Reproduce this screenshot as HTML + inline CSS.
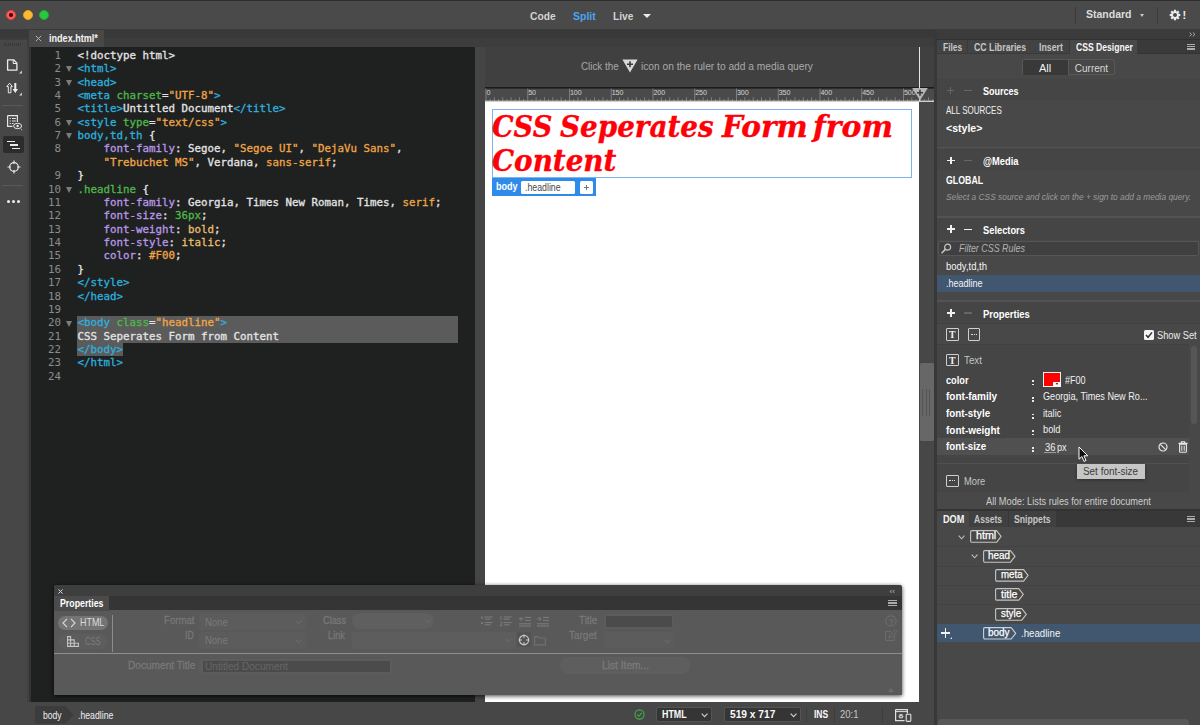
<!DOCTYPE html>
<html><head><meta charset="utf-8"><title>Dreamweaver</title>
<style>
*{box-sizing:border-box;margin:0;padding:0}
html,body{width:1200px;height:725px;overflow:hidden;background:#474747}
body{position:relative;font-family:"Liberation Sans",sans-serif;font-size:10px;color:#e6e6e6}
.a{position:absolute;display:block}
.t{position:absolute;white-space:pre;line-height:14px;height:14px;transform-origin:0 50%}
svg{position:absolute;overflow:visible}
#code{position:absolute;left:31px;top:47px;width:444px;height:655px;background:#1f2121;font-family:"DejaVu Sans Mono","Liberation Mono",monospace;font-size:10.8px;overflow:hidden}
.ln{position:absolute;left:0;width:30px;text-align:right;line-height:13.375px;height:13.375px;color:#8c8c8c}
.fd{position:absolute;left:34.7px;border-left:3.5px solid transparent;border-right:3.5px solid transparent;border-top:6.4px solid #7c7c7c}
.cl{position:absolute;left:46.5px;line-height:13.375px;height:13.375px;font:inherit;font-weight:normal;-webkit-text-stroke:0.3px;white-space:pre}
.p{color:#e4e4e4}.tg{color:#2db0de}.at{color:#4db848}.st{color:#f0a646}.pr{color:#b898e6}.vl{color:#e8bd6c}
</style></head><body>
<i class="a" style="left:0px;top:0px;width:1200px;height:29px;background:#4a4a4a;border-top:1px solid #2d2d2d"></i>
<i class="a" style="left:5.7px;top:9.8px;width:10.4px;height:10.4px;border-radius:50%;background:#fc5b57;border:0.5px solid #e2463f"></i>
<i class="a" style="left:22.5px;top:9.8px;width:10.4px;height:10.4px;border-radius:50%;background:#fdbc2e;border:0.5px solid #e0a028"></i>
<i class="a" style="left:39.1px;top:9.8px;width:10.4px;height:10.4px;border-radius:50%;background:#28c840;border:0.5px solid #1fab30"></i>
<i class="a" style="left:9.1px;top:13.2px;width:3.6px;height:3.6px;border-radius:50%;background:#4c0002"></i>
<span class="t" style="left:529.50px;top:9px;font-size:11px;color:#d4d4d4;font-weight:bold;transform:scaleX(0.931);">Code</span>
<span class="t" style="left:572.50px;top:9px;font-size:11px;color:#4aa4f2;font-weight:bold;transform:scaleX(0.952);">Split</span>
<span class="t" style="left:612.80px;top:9px;font-size:11px;color:#d4d4d4;font-weight:bold;transform:scaleX(0.923);">Live</span>
<i class="a" style="left:642.7px;top:13.5px;border-left:4px solid transparent;border-right:4px solid transparent;border-top:4.8px solid #ececec"></i>
<i class="a" style="left:1075px;top:7px;width:1px;height:17px;background:#3b3b3b;"></i>
<span class="t" style="left:1085.50px;top:7px;font-size:11.5px;color:#dcdcdc;font-weight:bold;transform:scaleX(0.913);">Standard</span>
<i class="a" style="left:1139.5px;top:13.6px;border-left:2.6px solid transparent;border-right:2.6px solid transparent;border-top:3px solid #c8c8c8"></i>
<i class="a" style="left:1156.5px;top:7px;width:1px;height:17px;background:#3b3b3b;"></i>
<svg style="left:1169.2px;top:9.3px" width="12" height="12" viewBox="-6 -6 12 12"><g fill="#ececec"><circle r="3.8"/><rect id="gt" x="-1.1" y="-5.3" width="2.2" height="10.6"/><use href="#gt" transform="rotate(45)"/><use href="#gt" transform="rotate(90)"/><use href="#gt" transform="rotate(135)"/></g><circle r="2" fill="#4a4a4a"/></svg>
<span class="t" style="left:1182.60px;top:8px;font-size:11px;color:#ececec;font-weight:bold;">!</span>
<i class="a" style="left:0px;top:29px;width:1200px;height:18px;background:#3d3d3d;"></i>
<i class="a" style="left:0px;top:29px;width:1200px;height:9px;background:#393939;"></i>
<i class="a" style="left:28.5px;top:30px;width:75.5px;height:17px;background:#484848;"></i>
<svg style="left:35px;top:35px" width="7" height="7" viewBox="0 0 7 7"><path d="M0.8 0.8L6.2 6.2M6.2 0.8L0.8 6.2" stroke="#b4b4b4" stroke-width="1" fill="none"/></svg>
<span class="t" style="left:48.70px;top:32px;font-size:10px;color:#f4f4f4;font-weight:bold;transform:scaleX(0.907);">index.html*</span>
<i class="a" style="left:0px;top:39.6px;width:26.5px;height:686px;background:#474747;"></i>
<i class="a" style="left:4px;top:43px;width:17px;height:3px;background:repeating-linear-gradient(90deg,#393939 0 1px,transparent 1px 2px);"></i>
<i class="a" style="left:26.5px;top:47px;width:4.5px;height:655px;background:linear-gradient(90deg,#414141 0 2.5px,#343434 2.5px);"></i>
<svg style="left:6px;top:58px" width="18" height="20" viewBox="0 0 18 20"><path d="M1.6 1.8H7.6L10.9 5.1V12.1H1.6Z" fill="none" stroke="#ededed" stroke-width="1.3" stroke-linejoin="round"/><path d="M7.2 2V5.5H10.7" fill="none" stroke="#ededed" stroke-width="1"/><path d="M16 12.4V15.4H13Z" fill="#cfcfcf"/></svg>
<svg style="left:6px;top:82px" width="18" height="20" viewBox="0 0 18 20"><path d="M3.6 1.2L6.4 4.6H4.9V10.8H2.3V4.6H0.8Z" fill="none" stroke="#ededed" stroke-width="1"/><path d="M8.3 1V7H6.6L9.3 10.9L12 7H10.3V1Z" fill="#ededed"/><path d="M16 10.4V13.4H13Z" fill="#cfcfcf"/></svg>
<i class="a" style="left:2px;top:104.5px;width:21px;height:1px;background:#585858;"></i>
<svg style="left:6px;top:114px" width="18" height="18" viewBox="0 0 18 18"><path d="M1.6 1.6H11.4V8M1.6 1.6V12.4H6.5" fill="none" stroke="#e6e6e6" stroke-width="1.2"/><path d="M3.6 4.5h1.2M6 4.5h3.8M3.6 7h1.2M6 7h3.8M3.6 9.5h1.2M6 9.5h1.5" stroke="#e6e6e6" stroke-width="1"/><ellipse cx="11.6" cy="12" rx="4" ry="2.7" fill="#474747" stroke="#e6e6e6" stroke-width="1"/><circle cx="11.6" cy="12" r="1.2" fill="#e6e6e6"/><path d="M15 16.2V14.4L16.4 16.2Z" fill="#cfcfcf"/></svg>
<i class="a" style="left:3px;top:136px;width:21px;height:17px;background:#2c2c2c;border-radius:2px"></i>
<i class="a" style="left:7px;top:140.5px;width:8px;height:1.6px;background:#ededed;"></i><i class="a" style="left:10px;top:144px;width:8px;height:1.6px;background:#ededed;"></i><i class="a" style="left:12px;top:147.5px;width:8px;height:1.6px;background:#ededed;"></i>
<svg style="left:6px;top:159px" width="16" height="16" viewBox="0 0 16 16"><circle cx="8" cy="8" r="4.3" fill="none" stroke="#e6e6e6" stroke-width="1.2"/><path d="M8 1.5V5M8 11V14.5M1.5 8H5M11 8H14.5" stroke="#e6e6e6" stroke-width="1.2"/></svg>
<i class="a" style="left:2px;top:184.5px;width:21px;height:1px;background:#585858;"></i>
<i class="a" style="left:7px;top:199.5px;width:3.4px;height:3.4px;background:#ededed;border-radius:50%"></i>
<i class="a" style="left:12px;top:199.5px;width:3.4px;height:3.4px;background:#ededed;border-radius:50%"></i>
<i class="a" style="left:17px;top:199.5px;width:3.4px;height:3.4px;background:#ededed;border-radius:50%"></i>
<div id="code">
<i class="a" style="left:46px;top:269.30px;width:381px;height:26.75px;background:#5b5b5b"></i>
<i class="a" style="left:46px;top:295.75px;width:46px;height:13.68px;background:#5b5b5b"></i>
<span class="ln" style="top:1.80px">1</span>
<pre class="cl" style="top:1.80px"><span class="p">&lt;!doctype html&gt;</span></pre>
<span class="ln" style="top:15.17px">2</span>
<i class="fd" style="top:19.37px"></i>
<pre class="cl" style="top:15.17px"><span class="tg">&lt;html&gt;</span></pre>
<span class="ln" style="top:28.55px">3</span>
<i class="fd" style="top:32.75px"></i>
<pre class="cl" style="top:28.55px"><span class="tg">&lt;head&gt;</span></pre>
<span class="ln" style="top:41.92px">4</span>
<pre class="cl" style="top:41.92px"><span class="tg">&lt;meta</span> <span class="at">charset</span><span class="p">=</span><span class="st">"UTF-8"</span><span class="tg">&gt;</span></pre>
<span class="ln" style="top:55.30px">5</span>
<pre class="cl" style="top:55.30px"><span class="tg">&lt;title&gt;</span><span class="p">Untitled Document</span><span class="tg">&lt;/title&gt;</span></pre>
<span class="ln" style="top:68.67px">6</span>
<i class="fd" style="top:72.88px"></i>
<pre class="cl" style="top:68.67px"><span class="tg">&lt;style</span> <span class="at">type</span><span class="p">=</span><span class="st">"text/css"</span><span class="tg">&gt;</span></pre>
<span class="ln" style="top:82.05px">7</span>
<i class="fd" style="top:86.25px"></i>
<pre class="cl" style="top:82.05px"><span class="tg">body,td,th</span> <span class="p">{</span></pre>
<span class="ln" style="top:95.42px">8</span>
<pre class="cl" style="top:95.42px">    <span class="pr">font-family</span><span class="p">: Segoe, </span><span class="st">"Segoe UI"</span><span class="p">, </span><span class="st">"DejaVu Sans"</span><span class="p">,</span></pre>
<pre class="cl" style="top:108.80px">    <span class="st">"Trebuchet MS"</span><span class="p">, Verdana, </span><span class="st">sans-serif</span><span class="p">;</span></pre>
<span class="ln" style="top:122.17px">9</span>
<pre class="cl" style="top:122.17px"><span class="p">}</span></pre>
<span class="ln" style="top:135.55px">10</span>
<i class="fd" style="top:139.75px"></i>
<pre class="cl" style="top:135.55px"><span class="at">.headline</span> <span class="p">{</span></pre>
<span class="ln" style="top:148.93px">11</span>
<pre class="cl" style="top:148.93px">    <span class="pr">font-family</span><span class="p">: Georgia, Times New Roman, Times, </span><span class="st">serif</span><span class="p">;</span></pre>
<span class="ln" style="top:162.30px">12</span>
<pre class="cl" style="top:162.30px">    <span class="pr">font-size</span><span class="p">: </span><span class="at">36px</span><span class="p">;</span></pre>
<span class="ln" style="top:175.68px">13</span>
<pre class="cl" style="top:175.68px">    <span class="pr">font-weight</span><span class="p">: </span><span class="vl">bold</span><span class="p">;</span></pre>
<span class="ln" style="top:189.05px">14</span>
<pre class="cl" style="top:189.05px">    <span class="pr">font-style</span><span class="p">: </span><span class="vl">italic</span><span class="p">;</span></pre>
<span class="ln" style="top:202.43px">15</span>
<pre class="cl" style="top:202.43px">    <span class="pr">color</span><span class="p">: </span><span class="st">#F00</span><span class="p">;</span></pre>
<span class="ln" style="top:215.80px">16</span>
<pre class="cl" style="top:215.80px"><span class="p">}</span></pre>
<span class="ln" style="top:229.18px">17</span>
<pre class="cl" style="top:229.18px"><span class="tg">&lt;/style&gt;</span></pre>
<span class="ln" style="top:242.55px">18</span>
<pre class="cl" style="top:242.55px"><span class="tg">&lt;/head&gt;</span></pre>
<span class="ln" style="top:255.93px">19</span>
<span class="ln" style="top:269.30px">20</span>
<i class="fd" style="top:273.50px"></i>
<pre class="cl" style="top:269.30px"><span class="tg">&lt;body</span> <span class="at">class</span><span class="p">=</span><span class="st">"headline"</span><span class="tg">&gt;</span></pre>
<span class="ln" style="top:282.68px">21</span>
<pre class="cl" style="top:282.68px"><span class="p">CSS Seperates Form from Content</span></pre>
<span class="ln" style="top:296.05px">22</span>
<pre class="cl" style="top:296.05px"><span class="tg">&lt;/body&gt;</span></pre>
<span class="ln" style="top:309.43px">23</span>
<pre class="cl" style="top:309.43px"><span class="tg">&lt;/html&gt;</span></pre>
<span class="ln" style="top:322.80px">24</span>
</div>
<i class="a" style="left:475px;top:47px;width:10px;height:655px;background:#454545;"></i>
<i class="a" style="left:485px;top:46.5px;width:449.5px;height:40.5px;background:#404040;"></i>
<span class="t" style="left:580.80px;top:60px;font-size:10px;color:#a9a9a9;transform:scaleX(0.980);">Click the</span>
<span class="t" style="left:640.60px;top:60px;font-size:10px;color:#a9a9a9;transform:scaleX(1.021);">icon on the ruler to add a media query</span>
<svg style="left:622px;top:58.5px" width="16" height="14" viewBox="0 0 16 14"><path d="M0.4 0.5H15.6L8 13.5Z" fill="#dadada"/><path d="M8 2.2V8.2M5 5.2H11" stroke="#3a3a3a" stroke-width="1.6"/></svg>
<svg style="left:485px;top:86.5px" width="449.5" height="15" viewBox="0 0 449.5 15"><rect x="0" y="0" width="449.5" height="15" fill="#4a4a4a"/><rect x="0" y="0" width="449.5" height="1.6" fill="#1b1b1b"/><path d="M1.00 1.6V14M5.17 12V14M9.35 10.2V14M13.52 12V14M17.70 10.2V14M21.88 12V14M26.05 10.2V14M30.22 12V14M34.40 10.2V14M38.57 12V14M42.75 1.6V14M46.92 12V14M51.10 10.2V14M55.27 12V14M59.45 10.2V14M63.62 12V14M67.80 10.2V14M71.97 12V14M76.15 10.2V14M80.33 12V14M84.50 1.6V14M88.67 12V14M92.85 10.2V14M97.02 12V14M101.20 10.2V14M105.38 12V14M109.55 10.2V14M113.72 12V14M117.90 10.2V14M122.07 12V14M126.25 1.6V14M130.42 12V14M134.60 10.2V14M138.78 12V14M142.95 10.2V14M147.12 12V14M151.30 10.2V14M155.47 12V14M159.65 10.2V14M163.82 12V14M168.00 1.6V14M172.17 12V14M176.35 10.2V14M180.53 12V14M184.70 10.2V14M188.88 12V14M193.05 10.2V14M197.22 12V14M201.40 10.2V14M205.57 12V14M209.75 1.6V14M213.92 12V14M218.10 10.2V14M222.27 12V14M226.45 10.2V14M230.62 12V14M234.80 10.2V14M238.97 12V14M243.15 10.2V14M247.32 12V14M251.50 1.6V14M255.67 12V14M259.85 10.2V14M264.02 12V14M268.20 10.2V14M272.38 12V14M276.55 10.2V14M280.72 12V14M284.90 10.2V14M289.07 12V14M293.25 1.6V14M297.43 12V14M301.60 10.2V14M305.77 12V14M309.95 10.2V14M314.12 12V14M318.30 10.2V14M322.47 12V14M326.65 10.2V14M330.82 12V14M335.00 1.6V14M339.18 12V14M343.35 10.2V14M347.52 12V14M351.70 10.2V14M355.88 12V14M360.05 10.2V14M364.22 12V14M368.40 10.2V14M372.57 12V14M376.75 1.6V14M380.93 12V14M385.10 10.2V14M389.27 12V14M393.45 10.2V14M397.62 12V14M401.80 10.2V14M405.97 12V14M410.15 10.2V14M414.32 12V14M418.50 1.6V14M422.67 12V14M426.85 10.2V14M431.02 12V14M435.20 10.2V14M439.38 12V14M443.55 10.2V14M447.72 12V14" stroke="#858585" stroke-width="0.9" fill="none"/><rect x="0" y="13.6" width="449.5" height="1.4" fill="#cfcfcf"/><text x="1.40" y="7.8" font-family="Liberation Sans, sans-serif" font-size="7.8" fill="#d2d2d2" textLength="4.0" lengthAdjust="spacingAndGlyphs">0</text><text x="43.15" y="7.8" font-family="Liberation Sans, sans-serif" font-size="7.8" fill="#d2d2d2" textLength="7.9" lengthAdjust="spacingAndGlyphs">50</text><text x="84.90" y="7.8" font-family="Liberation Sans, sans-serif" font-size="7.8" fill="#d2d2d2" textLength="11.9" lengthAdjust="spacingAndGlyphs">100</text><text x="126.65" y="7.8" font-family="Liberation Sans, sans-serif" font-size="7.8" fill="#d2d2d2" textLength="11.9" lengthAdjust="spacingAndGlyphs">150</text><text x="168.40" y="7.8" font-family="Liberation Sans, sans-serif" font-size="7.8" fill="#d2d2d2" textLength="11.9" lengthAdjust="spacingAndGlyphs">200</text><text x="210.15" y="7.8" font-family="Liberation Sans, sans-serif" font-size="7.8" fill="#d2d2d2" textLength="11.9" lengthAdjust="spacingAndGlyphs">250</text><text x="251.90" y="7.8" font-family="Liberation Sans, sans-serif" font-size="7.8" fill="#d2d2d2" textLength="11.9" lengthAdjust="spacingAndGlyphs">300</text><text x="293.65" y="7.8" font-family="Liberation Sans, sans-serif" font-size="7.8" fill="#d2d2d2" textLength="11.9" lengthAdjust="spacingAndGlyphs">350</text><text x="335.40" y="7.8" font-family="Liberation Sans, sans-serif" font-size="7.8" fill="#d2d2d2" textLength="11.9" lengthAdjust="spacingAndGlyphs">400</text><text x="377.15" y="7.8" font-family="Liberation Sans, sans-serif" font-size="7.8" fill="#d2d2d2" textLength="11.9" lengthAdjust="spacingAndGlyphs">450</text><text x="418.90" y="7.8" font-family="Liberation Sans, sans-serif" font-size="7.8" fill="#d2d2d2" textLength="11.9" lengthAdjust="spacingAndGlyphs">500</text></svg>
<i class="a" style="left:919px;top:46.5px;width:1.2px;height:54px;background:#e4e4e4;"></i>
<svg style="left:911.5px;top:88px" width="16" height="13" viewBox="0 0 16 13"><path d="M0.2 0H15.8L8 12.6Z" fill="#b4b4b4"/><path d="M8 1.8V7.8M5 4.8H11" stroke="#3a3a3a" stroke-width="1.5"/></svg>
<i class="a" style="left:485px;top:101.5px;width:434px;height:600.5px;background:#fff;"></i>
<i class="a" style="left:491.6px;top:109.4px;width:420.2px;height:68.6px;background:transparent;border:1.4px solid #7fb3ee"></i>
<span class="t" style="left:491.90px;top:110px;font-size:29.5px;color:#ff0008;font-weight:bold;font-style:italic;font-family:'DejaVu Serif',serif;transform:scaleX(0.921);line-height:34px;height:34px;-webkit-text-stroke:0.35px;">CSS</span>
<span class="t" style="left:560.20px;top:110px;font-size:29.5px;color:#ff0008;font-weight:bold;font-style:italic;font-family:'DejaVu Serif',serif;transform:scaleX(0.942);line-height:34px;height:34px;-webkit-text-stroke:0.35px;">Seperates</span>
<span class="t" style="left:722.00px;top:110px;font-size:29.5px;color:#ff0008;font-weight:bold;font-style:italic;font-family:'DejaVu Serif',serif;line-height:34px;height:34px;-webkit-text-stroke:0.35px;">Form</span>
<span class="t" style="left:812.52px;top:110px;font-size:29.5px;color:#ff0008;font-weight:bold;font-style:italic;font-family:'DejaVu Serif',serif;transform:scaleX(1.010);line-height:34px;height:34px;-webkit-text-stroke:0.35px;">from</span>
<span class="t" style="left:491.90px;top:144px;font-size:29.5px;color:#ff0008;font-weight:bold;font-style:italic;font-family:'DejaVu Serif',serif;transform:scaleX(0.942);line-height:34px;height:34px;-webkit-text-stroke:0.35px;">Content</span>
<i class="a" style="left:492px;top:178px;width:104px;height:18px;background:#2f8bea;"></i>
<span class="t" style="left:495.60px;top:180px;font-size:10px;color:#fff;font-weight:bold;transform:scaleX(0.904);">body</span>
<i class="a" style="left:521px;top:180.7px;width:53.5px;height:13px;background:#fff;border-radius:1.5px"></i>
<span class="t" style="left:525.00px;top:181px;font-size:10px;color:#4a4a4a;transform:scaleX(0.877);">.headline</span>
<i class="a" style="left:579.5px;top:180.7px;width:13.5px;height:13px;background:#fff;border-radius:1.5px"></i>
<i class="a" style="left:583.7px;top:186.7px;width:5.2px;height:1.1px;background:#777;"></i><i class="a" style="left:585.75px;top:184.65px;width:1.1px;height:5.2px;background:#777;"></i>
<i class="a" style="left:919px;top:101.5px;width:15.2px;height:623.5px;background:#474747;"></i>
<i class="a" style="left:920px;top:363px;width:13.8px;height:78px;background:#676767;border-radius:1.5px"></i>
<i class="a" style="left:922.2px;top:389px;width:0.9px;height:26.5px;background:#555;"></i>
<i class="a" style="left:925.8px;top:389px;width:0.9px;height:26.5px;background:#555;"></i>
<i class="a" style="left:929.3px;top:389px;width:0.9px;height:26.5px;background:#555;"></i>
<i class="a" style="left:934.2px;top:29px;width:2.8px;height:696px;background:#383838;"></i>
<i class="a" style="left:937px;top:29px;width:263px;height:10.5px;background:#3b3b3b;"></i>
<svg style="left:1188.6px;top:32.4px" width="7" height="5" viewBox="0 0 7 5"><path d="M0.6 0.5L2.6 2.4L0.6 4.3M3.9 0.5L5.9 2.4L3.9 4.3" fill="none" stroke="#bdbdbd" stroke-width="0.9"/></svg>
<i class="a" style="left:937px;top:38.6px;width:263px;height:1.2px;background:#313131;"></i>
<i class="a" style="left:937px;top:39.5px;width:263px;height:14.5px;background:#3a3a3a;"></i>
<i class="a" style="left:937px;top:39.5px;width:29.7px;height:14.5px;background:#434343;"></i>
<i class="a" style="left:967.5px;top:39.5px;width:65px;height:14.5px;background:#434343;"></i>
<i class="a" style="left:1033.3px;top:39.5px;width:35.7px;height:14.5px;background:#434343;"></i>
<i class="a" style="left:1069.6px;top:39.5px;width:67.6px;height:15px;background:#484848;"></i>
<span class="t" style="left:942.50px;top:41px;font-size:10px;color:#c6c6c6;font-weight:bold;transform:scaleX(0.840);">Files</span>
<span class="t" style="left:974.20px;top:41px;font-size:10px;color:#c6c6c6;font-weight:bold;transform:scaleX(0.876);">CC Libraries</span>
<span class="t" style="left:1039.00px;top:41px;font-size:10px;color:#c6c6c6;font-weight:bold;transform:scaleX(0.878);">Insert</span>
<span class="t" style="left:1075.50px;top:41px;font-size:10px;color:#f6f6f6;font-weight:bold;transform:scaleX(0.860);">CSS Designer</span>
<i class="a" style="left:1187px;top:44.2px;width:8.3px;height:1.0px;background:#ababab;"></i>
<i class="a" style="left:1187px;top:45.92px;width:8.3px;height:1.0px;background:#ababab;"></i>
<i class="a" style="left:1187px;top:47.64px;width:8.3px;height:1.0px;background:#ababab;"></i>
<i class="a" style="left:1187px;top:49.36px;width:8.3px;height:1.0px;background:#ababab;"></i>
<i class="a" style="left:1137.2px;top:53px;width:62.8px;height:1px;background:#343434;"></i>
<i class="a" style="left:937px;top:53.2px;width:132.6px;height:0.8px;background:#3a3a3a;"></i>
<i class="a" style="left:937px;top:54px;width:263px;height:438px;background:#484848;"></i>
<i class="a" style="left:1021.8px;top:59.3px;width:93.4px;height:16.2px;background:#474747;border:1px solid #585858;border-radius:2px"></i>
<i class="a" style="left:1022.5px;top:60px;width:45.5px;height:14.8px;background:#393939;border-radius:1.5px 0 0 1.5px"></i>
<i class="a" style="left:1068px;top:60px;width:1px;height:14.8px;background:#585858;"></i>
<span class="t" style="left:1038.80px;top:62px;font-size:10px;color:#f0f0f0;transform:scaleX(1.102);">All</span>
<span class="t" style="left:1074.80px;top:62px;font-size:10px;color:#d6d6d6;">Current</span>
<i class="a" style="left:937px;top:79.3px;width:263px;height:20.7px;background:#454545;"></i>
<i class="a" style="left:946.5px;top:89.57499999999999px;width:7.7px;height:1.55px;background:#666;"></i><i class="a" style="left:949.575px;top:86.5px;width:1.55px;height:7.7px;background:#666;"></i><i class="a" style="left:963.5px;top:89.7px;width:8px;height:1.5px;background:#666;"></i>
<span class="t" style="left:982.70px;top:85px;font-size:10px;color:#ffffff;font-weight:bold;transform:scaleX(0.902);">Sources</span>
<span class="t" style="left:946.00px;top:103px;font-size:10.5px;color:#f0f0f0;transform:scaleX(0.762);">ALL SOURCES</span>
<span class="t" style="left:946.00px;top:122px;font-size:10px;color:#ffffff;font-weight:bold;transform:scaleX(1.054);">&lt;style&gt;</span>
<i class="a" style="left:937px;top:147.2px;width:263px;height:0.8px;background:#535353;"></i><i class="a" style="left:937px;top:148.6px;width:263px;height:0.8px;background:#535353;"></i>
<i class="a" style="left:937px;top:148.6px;width:263px;height:21.4px;background:#454545;"></i>
<i class="a" style="left:947px;top:159.575px;width:7.7px;height:1.55px;background:#f0f0f0;"></i><i class="a" style="left:950.075px;top:156.5px;width:1.55px;height:7.7px;background:#f0f0f0;"></i><i class="a" style="left:963.5px;top:159.7px;width:8px;height:1.5px;background:#666;"></i>
<span class="t" style="left:982.70px;top:155px;font-size:10px;color:#ffffff;font-weight:bold;transform:scaleX(0.929);">@Media</span>
<span class="t" style="left:946.00px;top:174px;font-size:10px;color:#ffffff;font-weight:bold;transform:scaleX(0.879);">GLOBAL</span>
<span class="t" style="left:945.50px;top:190px;font-size:9px;color:#9a9a9a;font-style:italic;transform:scaleX(0.929);">Select a CSS source and click on the + sign to add a media query.</span>
<i class="a" style="left:937px;top:216px;width:263px;height:0.8px;background:#535353;"></i><i class="a" style="left:937px;top:217.4px;width:263px;height:0.8px;background:#535353;"></i>
<i class="a" style="left:937px;top:217.5px;width:263px;height:22.5px;background:#454545;"></i>
<i class="a" style="left:947px;top:228.375px;width:7.7px;height:1.55px;background:#f0f0f0;"></i><i class="a" style="left:950.075px;top:225.3px;width:1.55px;height:7.7px;background:#f0f0f0;"></i><i class="a" style="left:964px;top:228.5px;width:7.5px;height:1.5px;background:#f0f0f0;"></i>
<span class="t" style="left:982.70px;top:224px;font-size:10px;color:#ffffff;font-weight:bold;transform:scaleX(0.930);">Selectors</span>
<i class="a" style="left:937.5px;top:241px;width:261px;height:15.4px;background:#404040;border:1px solid #565656;border-radius:2px"></i>
<svg style="left:941px;top:243px" width="11" height="11" viewBox="0 0 11 11"><circle cx="6.6" cy="4.2" r="3" fill="none" stroke="#c4c4c4" stroke-width="1.2"/><path d="M4.4 6.4L1 9.8" stroke="#c4c4c4" stroke-width="1.6" stroke-linecap="round"/></svg>
<span class="t" style="left:958.80px;top:241px;font-size:10.5px;color:#b2b2b2;font-style:italic;transform:scaleX(0.849);">Filter CSS Rules</span>
<span class="t" style="left:946.00px;top:260px;font-size:10px;color:#f4f4f4;transform:scaleX(0.950);">body,td,th</span>
<i class="a" style="left:937px;top:275.2px;width:263px;height:16.6px;background:#415770;"></i>
<span class="t" style="left:946.00px;top:277px;font-size:10px;color:#f4f4f4;transform:scaleX(0.902);">.headline</span>
<i class="a" style="left:937px;top:300px;width:263px;height:0.8px;background:#535353;"></i><i class="a" style="left:937px;top:301.4px;width:263px;height:0.8px;background:#535353;"></i>
<i class="a" style="left:937px;top:301.5px;width:263px;height:22px;background:#454545;"></i>
<i class="a" style="left:947px;top:312.27500000000003px;width:7.7px;height:1.55px;background:#f0f0f0;"></i><i class="a" style="left:950.075px;top:309.2px;width:1.55px;height:7.7px;background:#f0f0f0;"></i><i class="a" style="left:963.5px;top:312.4px;width:8px;height:1.5px;background:#666;"></i>
<span class="t" style="left:982.70px;top:308px;font-size:10px;color:#ffffff;font-weight:bold;transform:scaleX(0.948);">Properties</span>
<i class="a" style="left:937px;top:323.5px;width:263px;height:20.7px;background:#484848;"></i>
<i class="a" style="left:937px;top:344.2px;width:263px;height:148px;background:#454545;"></i>
<i class="a" style="left:937px;top:323.2px;width:263px;height:1px;background:#404040;"></i><i class="a" style="left:937px;top:343.8px;width:263px;height:1px;background:#404040;"></i>
<i class="a" style="left:946.2px;top:328.2px;width:12.4px;height:12.4px;background:transparent;border:1px solid #cfcfcf;border-radius:1px"></i><span class="t" style="left:948.80px;top:328px;font-size:9.5px;color:#f2f2f2;font-weight:bold;font-family:'Liberation Serif',serif;transform:scaleX(1.029);">T</span>
<i class="a" style="left:968px;top:328.2px;width:12.4px;height:12.4px;background:transparent;border:1px solid #cfcfcf;border-radius:1px"></i><i class="a" style="left:971.2px;top:333.9px;width:1.4px;height:1.2px;background:#e0e0e0;"></i><i class="a" style="left:973.5px;top:333.9px;width:1.4px;height:1.2px;background:#e0e0e0;"></i><i class="a" style="left:975.8px;top:333.9px;width:1.4px;height:1.2px;background:#e0e0e0;"></i>
<i class="a" style="left:1144.2px;top:330px;width:9.8px;height:9.8px;background:#f4f4f4;border-radius:1.5px"></i>
<svg style="left:1144.2px;top:330px" width="10" height="10" viewBox="0 0 10 10"><path d="M2 5L4.1 7.3L8 2.4" fill="none" stroke="#333" stroke-width="1.5"/></svg>
<span class="t" style="left:1157.40px;top:329px;font-size:10px;color:#ececec;transform:scaleX(0.925);">Show Set</span>
<i class="a" style="left:1189px;top:344.2px;width:11px;height:148px;background:#484848;"></i>
<i class="a" style="left:1190.7px;top:345.7px;width:6.8px;height:78.8px;background:#565656;border-radius:3.4px"></i>
<i class="a" style="left:946.2px;top:354px;width:12.4px;height:12.4px;background:transparent;border:1px solid #cfcfcf;border-radius:1px"></i><span class="t" style="left:948.80px;top:354px;font-size:9.5px;color:#f2f2f2;font-weight:bold;font-family:'Liberation Serif',serif;transform:scaleX(1.029);">T</span>
<span class="t" style="left:963.80px;top:353px;font-size:10.5px;color:#c4c4c4;transform:scaleX(0.931);">Text</span>
<span class="t" style="left:946.00px;top:374px;font-size:10px;color:#fff;font-weight:bold;transform:scaleX(0.920);">color</span><i class="a" style="left:1031.5px;top:380.3px;width:2px;height:1.6px;background:#ececec;"></i><i class="a" style="left:1031.5px;top:383.5px;width:2px;height:1.6px;background:#ececec;"></i>
<i class="a" style="left:1042.8px;top:372.3px;width:18px;height:14.4px;background:#ff0000;border:1.3px solid #f4f4f4"></i>
<i class="a" style="left:1053.4px;top:381.6px;width:6.2px;height:4px;background:#f4f4f4;"></i>
<i class="a" style="left:1056.3px;top:383px;border-left:1.7px solid transparent;border-right:1.7px solid transparent;border-top:2px solid #111"></i>
<span class="t" style="left:1065.40px;top:374px;font-size:10px;color:#f0f0f0;transform:scaleX(0.904);">#F00</span>
<span class="t" style="left:946.00px;top:390px;font-size:10px;color:#fff;font-weight:bold;">font-family</span><i class="a" style="left:1031.5px;top:397.1px;width:2px;height:1.6px;background:#ececec;"></i><i class="a" style="left:1031.5px;top:400.3px;width:2px;height:1.6px;background:#ececec;"></i>
<span class="t" style="left:1042.60px;top:390px;font-size:10px;color:#f0f0f0;transform:scaleX(0.913);">Georgia, Times New Ro...</span>
<span class="t" style="left:946.00px;top:407px;font-size:10px;color:#fff;font-weight:bold;transform:scaleX(0.982);">font-style</span><i class="a" style="left:1031.5px;top:413.8px;width:2px;height:1.6px;background:#ececec;"></i><i class="a" style="left:1031.5px;top:417.0px;width:2px;height:1.6px;background:#ececec;"></i>
<span class="t" style="left:1042.60px;top:407px;font-size:10px;color:#f0f0f0;transform:scaleX(0.910);">italic</span>
<span class="t" style="left:946.00px;top:424px;font-size:10px;color:#fff;font-weight:bold;">font-weight</span><i class="a" style="left:1031.5px;top:430.4px;width:2px;height:1.6px;background:#ececec;"></i><i class="a" style="left:1031.5px;top:433.59999999999997px;width:2px;height:1.6px;background:#ececec;"></i>
<span class="t" style="left:1042.60px;top:423px;font-size:10px;color:#f0f0f0;transform:scaleX(0.927);">bold</span>
<i class="a" style="left:937px;top:438px;width:252px;height:17.1px;background:#505050;"></i>
<span class="t" style="left:946.00px;top:440px;font-size:10px;color:#fff;font-weight:bold;transform:scaleX(0.977);">font-size</span><i class="a" style="left:1031.5px;top:447.1px;width:2px;height:1.6px;background:#ececec;"></i><i class="a" style="left:1031.5px;top:450.3px;width:2px;height:1.6px;background:#ececec;"></i>
<span class="t" style="left:1044.60px;top:441px;font-size:10px;color:#f0f0f0;transform:scaleX(0.934);">36</span>
<i class="a" style="left:1044px;top:452.4px;width:12px;height:0.9px;background:#9a9a9a;"></i>
<span class="t" style="left:1057.30px;top:441px;font-size:10px;color:#f0f0f0;transform:scaleX(0.909);">px</span>
<svg style="left:1157.8px;top:442.3px" width="10" height="10" viewBox="0 0 10 10"><circle cx="5" cy="5" r="4" fill="none" stroke="#e8e8e8" stroke-width="1.2"/><path d="M2.3 2.3L7.7 7.7" stroke="#e8e8e8" stroke-width="1.2"/></svg>
<svg style="left:1178px;top:441px" width="10" height="12" viewBox="0 0 10 12"><path d="M0.5 2.4H9.5M3.4 2.2V0.8H6.6V2.2" fill="none" stroke="#e8e8e8" stroke-width="1.1"/><path d="M1.6 3.2H8.4V10.4Q8.4 11.2 7.6 11.2H2.4Q1.6 11.2 1.6 10.4Z" fill="none" stroke="#e8e8e8" stroke-width="1.1"/><path d="M3.8 4.6V9.8M6.2 4.6V9.8" stroke="#e8e8e8" stroke-width="1"/></svg>
<i class="a" style="left:937px;top:463.2px;width:252px;height:1px;background:#515151;"></i>
<i class="a" style="left:946.2px;top:474.6px;width:12.4px;height:12.4px;background:transparent;border:1px solid #cfcfcf;border-radius:1px"></i><i class="a" style="left:949.4000000000001px;top:480.3px;width:1.4px;height:1.2px;background:#e0e0e0;"></i><i class="a" style="left:951.7px;top:480.3px;width:1.4px;height:1.2px;background:#e0e0e0;"></i><i class="a" style="left:954.0px;top:480.3px;width:1.4px;height:1.2px;background:#e0e0e0;"></i>
<span class="t" style="left:963.80px;top:474px;font-size:10.5px;color:#c4c4c4;transform:scaleX(0.889);">More</span>
<i class="a" style="left:1077px;top:464.2px;width:67.8px;height:14.6px;background:#c6c6c6;box-shadow:0 1px 3px rgba(0,0,0,.35)"></i>
<span class="t" style="left:1083.00px;top:465px;font-size:10px;color:#3c3c3c;transform:scaleX(0.991);">Set font-size</span>
<svg style="left:1077.5px;top:445.5px" width="12" height="17" viewBox="0 0 12 17"><path d="M1 1V13.2L3.9 10.6L6 15.4L8 14.5L5.9 9.8H9.8Z" fill="#111" stroke="#fff" stroke-width="1" stroke-linejoin="round"/></svg>
<i class="a" style="left:937px;top:492px;width:263px;height:17.3px;background:#484848;"></i>
<span class="t" style="left:985.80px;top:495px;font-size:10px;color:#cccccc;transform:scaleX(0.924);">All Mode: Lists rules for entire document</span>
<i class="a" style="left:937px;top:509.2px;width:263px;height:1.8px;background:#333;"></i>
<i class="a" style="left:937px;top:511px;width:263px;height:15.7px;background:#383838;"></i>
<i class="a" style="left:937px;top:511px;width:31.5px;height:16px;background:#484848;"></i>
<i class="a" style="left:969.2px;top:511px;width:39.3px;height:15.7px;background:#404040;"></i>
<i class="a" style="left:1009.4px;top:511px;width:46.8px;height:15.7px;background:#404040;"></i>
<span class="t" style="left:942.60px;top:513px;font-size:10px;color:#f6f6f6;font-weight:bold;transform:scaleX(0.913);">DOM</span>
<span class="t" style="left:974.20px;top:513px;font-size:10px;color:#c6c6c6;font-weight:bold;transform:scaleX(0.854);">Assets</span>
<span class="t" style="left:1014.20px;top:513px;font-size:10px;color:#c6c6c6;font-weight:bold;transform:scaleX(0.867);">Snippets</span>
<i class="a" style="left:1186.6px;top:515.8px;width:8.3px;height:1.0px;background:#ababab;"></i>
<i class="a" style="left:1186.6px;top:517.52px;width:8.3px;height:1.0px;background:#ababab;"></i>
<i class="a" style="left:1186.6px;top:519.24px;width:8.3px;height:1.0px;background:#ababab;"></i>
<i class="a" style="left:1186.6px;top:520.9599999999999px;width:8.3px;height:1.0px;background:#ababab;"></i>
<i class="a" style="left:937px;top:526.7px;width:263px;height:198.3px;background:#484848;"></i>
<i class="a" style="left:937px;top:546.3px;width:263px;height:1px;background:#434343;"></i>
<i class="a" style="left:937px;top:565.5px;width:263px;height:1px;background:#434343;"></i>
<i class="a" style="left:937px;top:584.7px;width:263px;height:1px;background:#434343;"></i>
<i class="a" style="left:937px;top:604.0px;width:263px;height:1px;background:#434343;"></i>
<i class="a" style="left:937px;top:623.7px;width:263px;height:18.2px;background:#415770;"></i>
<svg style="left:957.8px;top:534.5px" width="8" height="5" viewBox="0 0 8 5"><path d="M0.7 0.7L3.6 3.8L6.5 0.7" fill="none" stroke="#c0c0c0" stroke-width="1.1"/></svg><svg style="left:970.2px;top:530.3px" width="31.8" height="12.9" viewBox="0 0 31.8 12.9"><path d="M2 0.6H26.60L31.10 6.45L26.60 12.30H2Q0.6 12.30 0.6 10.90V2Q0.6 0.6 2 0.6Z" fill="none" stroke="#c4c4c4" stroke-width="1.1" stroke-linejoin="round"/></svg><span class="t" style="left:975.60px;top:529px;font-size:10px;color:#ffffff;transform:scaleX(1.071);-webkit-text-stroke:0.25px;">html</span>
<svg style="left:970.8px;top:553.8px" width="8" height="5" viewBox="0 0 8 5"><path d="M0.7 0.7L3.6 3.8L6.5 0.7" fill="none" stroke="#c0c0c0" stroke-width="1.1"/></svg><svg style="left:982.8px;top:549.7px" width="32.7" height="12.8" viewBox="0 0 32.7 12.8"><path d="M2 0.6H27.50L32.00 6.40L27.50 12.20H2Q0.6 12.20 0.6 10.80V2Q0.6 0.6 2 0.6Z" fill="none" stroke="#c4c4c4" stroke-width="1.1" stroke-linejoin="round"/></svg><span class="t" style="left:987.80px;top:549px;font-size:10px;color:#ffffff;transform:scaleX(0.987);-webkit-text-stroke:0.25px;">head</span>
<svg style="left:995.2px;top:569.1px" width="33.8" height="12.7" viewBox="0 0 33.8 12.7"><path d="M2 0.6H28.60L33.10 6.35L28.60 12.10H2Q0.6 12.10 0.6 10.70V2Q0.6 0.6 2 0.6Z" fill="none" stroke="#c4c4c4" stroke-width="1.1" stroke-linejoin="round"/></svg><span class="t" style="left:1000.50px;top:568px;font-size:10px;color:#ffffff;transform:scaleX(0.970);-webkit-text-stroke:0.25px;">meta</span>
<svg style="left:995.2px;top:588.4px" width="29" height="12.7" viewBox="0 0 29 12.7"><path d="M2 0.6H23.80L28.30 6.35L23.80 12.10H2Q0.6 12.10 0.6 10.70V2Q0.6 0.6 2 0.6Z" fill="none" stroke="#c4c4c4" stroke-width="1.1" stroke-linejoin="round"/></svg><span class="t" style="left:1000.50px;top:588px;font-size:10px;color:#ffffff;transform:scaleX(1.062);-webkit-text-stroke:0.25px;">title</span>
<svg style="left:995.2px;top:607.7px" width="32" height="12.8" viewBox="0 0 32 12.8"><path d="M2 0.6H26.80L31.30 6.40L26.80 12.20H2Q0.6 12.20 0.6 10.80V2Q0.6 0.6 2 0.6Z" fill="none" stroke="#c4c4c4" stroke-width="1.1" stroke-linejoin="round"/></svg><span class="t" style="left:1000.50px;top:607px;font-size:10px;color:#ffffff;transform:scaleX(0.976);-webkit-text-stroke:0.25px;">style</span>
<svg style="left:982.8px;top:626.7px" width="33.4" height="12.6" viewBox="0 0 33.4 12.6"><path d="M2 0.6H28.20L32.70 6.30L28.20 12.00H2Q0.6 12.00 0.6 10.60V2Q0.6 0.6 2 0.6Z" fill="none" stroke="#d0d0d0" stroke-width="1.1" stroke-linejoin="round"/></svg><span class="t" style="left:988.00px;top:626px;font-size:10px;color:#ffffff;transform:scaleX(0.991);-webkit-text-stroke:0.25px;">body</span>
<span class="t" style="left:1020.80px;top:627px;font-size:10px;color:#f4f4f4;transform:scaleX(0.968);">.headline</span>
<i class="a" style="left:941.2px;top:632.4px;width:9px;height:1.4px;background:#f2f2f2;"></i><i class="a" style="left:945px;top:628.4px;width:1.4px;height:9.3px;background:#f2f2f2;"></i>
<i class="a" style="left:949.5px;top:636.5px;border-left:2.2px solid transparent;border-bottom:2.2px solid #e0e0e0"></i>
<i class="a" style="left:938px;top:719px;width:251px;height:6px;background:#585858;border-radius:4px 4px 0 0"></i>
<i class="a" style="left:0px;top:702px;width:934.2px;height:23px;background:#474747;"></i>
<svg style="left:34.7px;top:706px" width="39" height="17.4" viewBox="0 0 39 17.4"><path d="M1.5 0H30.5L38.3 8.7L30.5 17.4H1.5Q0 17.4 0 15.9V1.5Q0 0 1.5 0Z" fill="#3c3c3c"/></svg>
<span class="t" style="left:43.00px;top:709px;font-size:10px;color:#f0f0f0;transform:scaleX(0.858);">body</span>
<span class="t" style="left:78.30px;top:709px;font-size:10px;color:#f0f0f0;transform:scaleX(0.870);">.headline</span>
<svg style="left:633.5px;top:708.8px" width="11" height="11" viewBox="0 0 11 11"><circle cx="5.5" cy="5.5" r="4.6" fill="none" stroke="#3fae49" stroke-width="1.1"/><path d="M3.2 5.6L4.9 7.3L7.8 3.8" fill="none" stroke="#3fae49" stroke-width="1.1"/></svg>
<i class="a" style="left:656px;top:707px;width:56px;height:15.3px;background:#353535;border:1px solid #545454;border-radius:2px"></i>
<span class="t" style="left:662.20px;top:708px;font-size:10px;color:#fafafa;font-weight:bold;transform:scaleX(0.886);">HTML</span>
<svg style="left:701px;top:712.6px" width="8" height="5" viewBox="0 0 8 5"><path d="M0.7 0.7L3.6 3.6L6.5 0.7" fill="none" stroke="#d0d0d0" stroke-width="1.1"/></svg>
<i class="a" style="left:723.5px;top:707px;width:77px;height:15.3px;background:#353535;border:1px solid #545454;border-radius:2px"></i>
<span class="t" style="left:729.50px;top:708px;font-size:10px;color:#fafafa;font-weight:bold;transform:scaleX(1.019);">519 x 717</span>
<svg style="left:789.8px;top:712.6px" width="8" height="5" viewBox="0 0 8 5"><path d="M0.7 0.7L3.6 3.6L6.5 0.7" fill="none" stroke="#d0d0d0" stroke-width="1.1"/></svg>
<i class="a" style="left:806.4px;top:707px;width:1px;height:15.3px;background:#3d3d3d;"></i><i class="a" style="left:833.5px;top:707px;width:1px;height:15.3px;background:#3d3d3d;"></i><i class="a" style="left:881.8px;top:707px;width:1px;height:15.3px;background:#3d3d3d;"></i>
<span class="t" style="left:813.60px;top:708px;font-size:10px;color:#fafafa;font-weight:bold;transform:scaleX(0.847);">INS</span>
<span class="t" style="left:839.50px;top:708px;font-size:10px;color:#c6c6c6;transform:scaleX(0.945);">20:1</span>
<svg style="left:895px;top:709.3px" width="17" height="13" viewBox="0 0 17 13"><path d="M0.6 0.6H12.4V4.5M0.6 0.6V11.6H9.5" fill="none" stroke="#e0e0e0" stroke-width="1.2"/><path d="M0.6 2.6H12.4" stroke="#e0e0e0" stroke-width="1"/><circle cx="6" cy="7.3" r="2.3" fill="#d8d8d8"/><path d="M4.6 6.6L6 8.4L7.4 6.3" stroke="#474747" stroke-width="0.8" fill="none"/><rect x="11.2" y="5.2" width="4.6" height="7.2" rx="0.8" fill="#474747" stroke="#e0e0e0" stroke-width="1.1"/></svg>
<i class="a" style="left:53.6px;top:585px;width:848.4px;height:110px;background:#595959;border-radius:2.5px 2.5px 0 0;box-shadow:0 1px 4px rgba(0,0,0,.75)"></i>
<i class="a" style="left:53.6px;top:585px;width:848.4px;height:10.6px;background:#3e3e3e;border-radius:2.5px 2.5px 0 0"></i>
<i class="a" style="left:53.6px;top:595.6px;width:848.4px;height:14.8px;background:#353535;"></i>
<i class="a" style="left:53.6px;top:595.6px;width:55px;height:15px;background:#4b4b4b;"></i>
<svg style="left:57.8px;top:588.8px" width="5" height="5" viewBox="0 0 5 5"><path d="M0.4 0.4L4.6 4.6M4.6 0.4L0.4 4.6" stroke="#d8d8d8" stroke-width="1" fill="none"/></svg>
<span class="t" style="left:59.60px;top:597px;font-size:10px;color:#ffffff;font-weight:bold;transform:scaleX(0.878);">Properties</span>
<span class="t" style="left:889.60px;top:585px;font-size:8px;color:#bdbdbd;">‹‹</span>
<i class="a" style="left:888.2px;top:600.0px;width:8.4px;height:1.0px;background:#ababab;"></i>
<i class="a" style="left:888.2px;top:601.72px;width:8.4px;height:1.0px;background:#ababab;"></i>
<i class="a" style="left:888.2px;top:603.44px;width:8.4px;height:1.0px;background:#ababab;"></i>
<i class="a" style="left:888.2px;top:605.16px;width:8.4px;height:1.0px;background:#ababab;"></i>
<i class="a" style="left:57.6px;top:615.6px;width:50.4px;height:14.8px;background:#747474;border-radius:7.4px"></i>
<svg style="left:61.5px;top:618.2px" width="14" height="10" viewBox="0 0 14 10"><path d="M5 0.8L1 5L5 9.2M9 0.8L13 5L9 9.2" fill="none" stroke="#d6d6d6" stroke-width="1.2"/></svg>
<span class="t" style="left:80.40px;top:615px;font-size:10.5px;color:#dcdcdc;transform:scaleX(0.849);">HTML</span>
<i class="a" style="left:57.6px;top:633.8px;width:50.4px;height:15.2px;background:#5d5d5d;border-radius:7.6px"></i>
<svg style="left:67px;top:635.6px" width="12" height="11" viewBox="0 0 12 11"><path d="M0.6 0.6H3.6V10.4H0.6ZM0.6 3.9H7.2V10.4M0.6 7.2H11.4V10.4H0.6M3.6 3.9V10.4M7.2 7.2V10.4" fill="none" stroke="#c4c4c4" stroke-width="1.1"/></svg>
<span class="t" style="left:85.20px;top:634px;font-size:10.5px;color:#7c7c7c;transform:scaleX(0.723);">CSS</span>
<i class="a" style="left:112px;top:615px;width:1px;height:36.5px;background:#8c8c8c;"></i>
<i class="a" style="left:53.6px;top:653.2px;width:848.4px;height:1px;background:#8e8e8e;"></i>
<span class="t" style="left:163.80px;top:613px;font-size:10.5px;color:#787878;transform:scaleX(0.918);-webkit-text-stroke:0.3px;">Format</span>
<span class="t" style="left:185.40px;top:628px;font-size:10.5px;color:#787878;transform:scaleX(0.824);-webkit-text-stroke:0.3px;">ID</span>
<i class="a" style="left:199px;top:613px;width:107px;height:17px;background:#5c5c5c;border-radius:2px"></i>
<i class="a" style="left:199px;top:632px;width:107px;height:17px;background:#5c5c5c;border-radius:2px"></i>
<span class="t" style="left:205.20px;top:615px;font-size:10.5px;color:#7a7a7a;transform:scaleX(0.903);">None</span>
<span class="t" style="left:205.20px;top:633px;font-size:10.5px;color:#7a7a7a;transform:scaleX(0.903);">None</span>
<svg style="left:294.5px;top:620px" width="7" height="5" viewBox="0 0 7 5"><path d="M0.6 0.8L3.5 3.6L6.4 0.8" fill="none" stroke="#707070" stroke-width="1"/></svg><svg style="left:294.5px;top:638.5px" width="7" height="5" viewBox="0 0 7 5"><path d="M0.6 0.8L3.5 3.6L6.4 0.8" fill="none" stroke="#707070" stroke-width="1"/></svg>
<span class="t" style="left:323.20px;top:613px;font-size:10.5px;color:#787878;transform:scaleX(0.877);-webkit-text-stroke:0.3px;">Class</span>
<span class="t" style="left:328.40px;top:628px;font-size:10.5px;color:#787878;transform:scaleX(0.879);-webkit-text-stroke:0.3px;">Link</span>
<i class="a" style="left:351.6px;top:612.6px;width:82.8px;height:16.6px;background:#5f5f5f;border-radius:8.3px"></i>
<i class="a" style="left:351.6px;top:632px;width:164.6px;height:16.6px;background:#5d5d5d;border-radius:2px"></i>
<svg style="left:423.5px;top:619px" width="7" height="5" viewBox="0 0 7 5"><path d="M0.6 0.8L3.5 3.6L6.4 0.8" fill="none" stroke="#707070" stroke-width="1"/></svg><svg style="left:504.5px;top:638px" width="7" height="5" viewBox="0 0 7 5"><path d="M0.6 0.8L3.5 3.6L6.4 0.8" fill="none" stroke="#707070" stroke-width="1"/></svg>
<svg style="left:481px;top:616px" width="12" height="11" viewBox="0 0 12 11"><path d="M3.6 1h8M3.6 3.2h6M3.6 6.6h8M3.6 8.8h6" stroke="#7e7e7e" stroke-width="1"/><rect x="0" y="0.6" width="1.8" height="1.8" fill="#7e7e7e"/><rect x="0" y="6.2" width="1.8" height="1.8" fill="#7e7e7e"/></svg>
<svg style="left:500px;top:616px" width="12" height="11" viewBox="0 0 12 11"><path d="M3.6 1h8M3.6 3.2h6M3.6 6.6h8M3.6 8.8h6" stroke="#7e7e7e" stroke-width="1"/><path d="M0.9 0V4M0 6.2H1.8V8L0 9.8H2" stroke="#7e7e7e" stroke-width="0.9" fill="none"/></svg>
<svg style="left:518.6px;top:616px" width="12" height="11" viewBox="0 0 12 11"><path d="M6 1.4h6M6 4.4h6M0 7.8h12M0 10h12" stroke="#7e7e7e" stroke-width="1"/><path d="M4.6 2.9H0.8M2.4 1L0.5 2.9L2.4 4.8" stroke="#7e7e7e" stroke-width="1" fill="none"/></svg>
<svg style="left:537px;top:616px" width="12" height="11" viewBox="0 0 12 11"><path d="M6 1.4h6M6 4.4h6M0 7.8h12M0 10h12" stroke="#7e7e7e" stroke-width="1"/><path d="M0 2.9H3.8M2.2 1L4.1 2.9L2.2 4.8" stroke="#7e7e7e" stroke-width="1" fill="none"/></svg>
<i class="a" style="left:516.6px;top:631.8px;width:14.6px;height:15.6px;background:#535353;border-radius:2px"></i>
<svg style="left:518px;top:633.6px" width="12" height="12" viewBox="0 0 12 12"><circle cx="6" cy="6" r="4.6" fill="none" stroke="#c8c8c8" stroke-width="1.2"/><path d="M6 0.6V4M6 8V11.4M0.6 6H4M8 6H11.4" stroke="#c8c8c8" stroke-width="1"/></svg>
<svg style="left:533.6px;top:635.6px" width="12" height="9.5" viewBox="0 0 12 9.5"><path d="M0.6 8.9V0.6H4.2L5.4 2H11.4V8.9Z" fill="none" stroke="#707070" stroke-width="1.1" stroke-linejoin="round"/></svg>
<span class="t" style="left:578.60px;top:613px;font-size:10.5px;color:#787878;transform:scaleX(0.938);-webkit-text-stroke:0.3px;">Title</span>
<span class="t" style="left:569.20px;top:628px;font-size:10.5px;color:#787878;transform:scaleX(0.950);-webkit-text-stroke:0.3px;">Target</span>
<i class="a" style="left:604px;top:613.8px;width:69.2px;height:15px;background:#5c5c5c;border-radius:2px"></i>
<i class="a" style="left:605.6px;top:615.6px;width:66px;height:11.4px;background:#4b4b4b;"></i>
<i class="a" style="left:604px;top:631.8px;width:69.2px;height:16.6px;background:#5c5c5c;border-radius:2px"></i>
<svg style="left:663.5px;top:639px" width="7" height="5" viewBox="0 0 7 5"><path d="M0.6 0.8L3.5 3.6L6.4 0.8" fill="none" stroke="#707070" stroke-width="1"/></svg>
<i class="a" style="left:560.4px;top:657px;width:129.2px;height:16.6px;background:#5e5e5e;border-radius:8.3px"></i>
<span class="t" style="left:601.80px;top:658px;font-size:10.5px;color:#7a7a7a;transform:scaleX(0.972);-webkit-text-stroke:0.3px;">List Item...</span>
<span class="t" style="left:127.80px;top:658px;font-size:10.5px;color:#787878;transform:scaleX(0.963);-webkit-text-stroke:0.3px;">Document Title</span>
<i class="a" style="left:199px;top:658.6px;width:193px;height:15.4px;background:#5c5c5c;border-radius:2px"></i>
<i class="a" style="left:203px;top:660.6px;width:187px;height:11.4px;background:#4b4b4b;"></i>
<span class="t" style="left:205.20px;top:659px;font-size:10.5px;color:#666666;transform:scaleX(0.960);">Untitled Document</span>
<svg style="left:885px;top:615px" width="12" height="12" viewBox="0 0 12 12"><circle cx="6" cy="6" r="5.2" fill="none" stroke="#6e6e6e" stroke-width="1"/></svg>
<span class="t" style="left:888.80px;top:615px;font-size:8.5px;color:#6e6e6e;font-weight:bold;">?</span>
<svg style="left:885px;top:628.6px" width="13" height="12" viewBox="0 0 13 12"><path d="M6 2.6H0.6V11.4H9.4V6.4" fill="none" stroke="#6e6e6e" stroke-width="1"/><path d="M10.4 0.6L12.2 2.4L6.4 8.2L4 8.8L4.6 6.4Z" fill="none" stroke="#6e6e6e" stroke-width="1"/></svg>
<i class="a" style="left:888px;top:688px;border-left:3.6px solid transparent;border-right:3.6px solid transparent;border-bottom:4px solid #6c6c6c"></i>
</body></html>
